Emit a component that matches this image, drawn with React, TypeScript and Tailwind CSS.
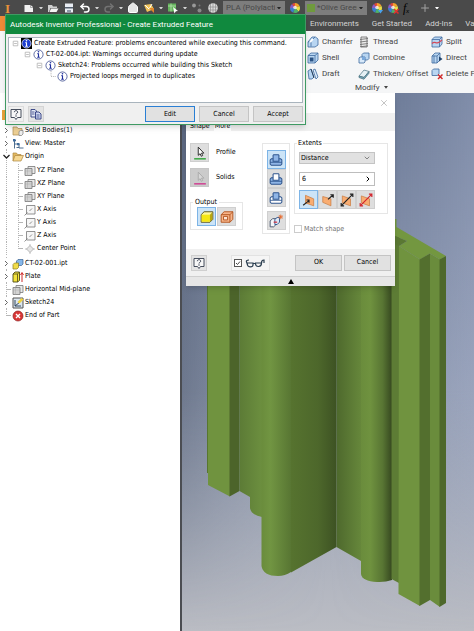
import React from "react";
import { ChevronDown, ChevronRight, Home, Plus, Redo2, Undo2, X } from "lucide-react";
import { clsx } from "clsx";

type GuideKind = "closed" | "open" | "branch" | "end" | "line";

interface TreeNode {
  label: string;
  guide: GuideKind;
  icon: React.ReactNode;
  children?: TreeNode[];
}

const Svg: React.FC<{ className?: string; children: React.ReactNode }> = ({ className = "size-3", children }) => (
  <svg viewBox="0 0 12 12" className={clsx("shrink-0", className)} fill="none" aria-hidden="true">
    {children}
  </svg>
);

const Caret: React.FC<{ className?: string }> = ({ className = "text-neutral-300" }) => (
  <svg viewBox="0 0 6 4" className={clsx("w-1 shrink-0", className)} aria-hidden="true">
    <path d="M0 0h6L3 4z" fill="currentColor" />
  </svg>
);

/* Toolbar icons */

const ColorWheel: React.FC<{ badge?: "drop" | "cross" }> = ({ badge }) => (
  <Svg>
    <path d="M6 6V1a5 5 0 0 1 4.500 3z" fill="#f3a02b" />
    <path d="M6 6l4.500-2a5 5 0 0 1-1 5.500z" fill="#e9df48" />
    <path d="M6 6l3.500 3.500A5 5 0 0 1 4 10.600z" fill="#4db26a" />
    <path d="M6 6l-2 4.600A5 5 0 0 1 1 6z" fill="#3c7ed0" />
    <path d="M6 6H1a5 5 0 0 1 2-4z" fill="#8a5cc4" />
    <path d="M6 6L3 2a5 5 0 0 1 3-1z" fill="#e0483c" />
    <circle cx="6" cy="5.500" r="1.800" fill="#fff" fillOpacity=".75" />
    {badge === "drop" && <path d="M7 8h5l-2.500 3.500z" fill="#4aa3ec" />}
    {badge === "cross" && <path d="M7 7l4.500 4.500M11.500 7L7 11.500" stroke="#e22f2f" strokeWidth="1.500" />}
  </Svg>
);

const NewIcon = () => (
  <Svg>
    <path d="M1.500 3h6l2.500 2v5h-8.500z" fill="#f1f1f1" />
    <path d="M7.500 3v2.500H10" stroke="#888" strokeWidth=".7" />
  </Svg>
);

const OpenIcon = () => (
  <Svg>
    <path d="M1 3h4l1 1.500h4V6H3.500L2 10H1z" fill="#cfcfcf" />
    <path d="M4 6.500h7.500L9.500 10H2.500z" fill="#f4f4f4" />
  </Svg>
);

const SaveIcon = () => (
  <Svg>
    <path d="M2 1.500h8v9H2z" fill="#e9edf3" />
    <path d="M2 5h8v1.500H2z" fill="#55606e" />
    <path d="M4 8h4v2.500H4z" fill="#8d99a8" />
  </Svg>
);

const ReturnIcon = () => (
  <Svg>
    <path d="M1 3l7-1 3 5-7 3z" fill="#f0c35a" />
    <path d="M2 3l4 4 3-5" stroke="#fff" />
    <path d="M6 6h5v5z" fill="#e0872c" />
  </Svg>
);

const SelectIcon = () => (
  <Svg>
    <path d="M1 1.500h8v8H1z" fill="#64b45c" />
    <path d="M1 4h8M4 1.500v8" stroke="#b8e0ae" strokeWidth=".8" />
    <path d="M6 5l5 4-2.200.3L7.500 11.500z" fill="#fff" />
  </Svg>
);

const NodesIcon = () => (
  <Svg>
    <circle cx="3" cy="3.500" r="1.900" fill="#999" />
    <circle cx="8.500" cy="8.500" r="2" fill="#8a8a8a" />
    <circle cx="8.500" cy="3.500" r="1" fill="#777" />
  </Svg>
);

const GlobeIcon = () => (
  <Svg>
    <circle cx="6" cy="6" r="4.800" fill="#dcdcdc" />
    <path d="M1.500 5h9M2 8h8M6 1.200v9.600M3.500 2v8M8.500 2v8" stroke="#8c8c8c" strokeWidth=".7" />
  </Svg>
);

/* Ribbon icons */

const BLUE = "#3d6a9e";
const PALE = "#b9d6f2";

const ChamferIcon = () => (
  <Svg>
    <path d="M1 6l4-5h3.500L11 3v6l-3 2H1z" fill={PALE} stroke={BLUE} strokeWidth=".8" />
    <path d="M1 6l3-1 4-4M4 5v5.500" stroke={BLUE} strokeWidth=".8" />
    <path d="M2 6l3-3.500 1.500 1L4 6.500z" fill="#fff" />
  </Svg>
);

const ShellIcon = () => (
  <Svg>
    <path d="M1 3.500L4 1h7v7l-3 3H1z" fill={PALE} stroke={BLUE} strokeWidth=".8" />
    <path d="M1 3.500h7V11M8 3.500L11 1" stroke={BLUE} strokeWidth=".8" />
    <path d="M2.800 5.500h3.700v4H2.800z" fill="#2a5385" />
  </Svg>
);

const DraftIcon = () => (
  <Svg>
    <path d="M1 3l3-2 3 8-2 2H2z" fill={PALE} stroke={BLUE} strokeWidth=".8" />
    <path d="M6 2l2-1 3 8-2 2z" fill="#dcebfa" stroke={BLUE} strokeWidth=".8" />
    <path d="M4 1l3 9" stroke="#27425f" />
  </Svg>
);

const ThreadIcon = () => (
  <Svg>
    <path d="M3 1h6v10H3z" fill="#ececec" stroke="#666" strokeWidth=".8" />
    <path d="M2 3.500l8-1M2 6l8-1M2 8.500l8-1M2 10.800l8-1" stroke="#666" strokeWidth=".8" />
  </Svg>
);

const CombineIcon = () => (
  <Svg>
    <path d="M4 2.500L5.500 1H11v5.500L9.500 8H4z" fill={PALE} stroke={BLUE} strokeWidth=".8" />
    <path d="M1 6l1-1h5v5l-1 1H1z" fill="#d8e9fa" stroke={BLUE} strokeWidth=".8" />
    <path d="M4 5h3v3H4z" fill="#7aa9dc" />
  </Svg>
);

const ThickenIcon = () => (
  <Svg>
    <path d="M1 8l5-6 5 1.500-5 6z" fill="#e5f0f4" stroke="#5a7f8d" strokeWidth=".8" />
    <path d="M1 8v1.500L6 11.200l5-6V3.500l-5 6z" fill="#7fb1c1" stroke="#4b7482" strokeWidth=".8" />
  </Svg>
);

const SplitIcon = () => (
  <Svg>
    <path d="M1 3.500L3.500 1H11v7l-2.500 3H1z" fill={PALE} stroke={BLUE} strokeWidth=".8" />
    <path d="M8.500 3.500V11M1 3.500h7.500L11 1" stroke={BLUE} strokeWidth=".8" />
    <path d="M1 7.500c3-3 4 1 7.500-1.500L11 4" stroke="#d44a5a" strokeWidth="1.200" />
  </Svg>
);

const DirectIcon = () => (
  <Svg>
    <path d="M1 4l3-3h5v7l-3 3H1z" fill={PALE} stroke={BLUE} strokeWidth=".8" />
    <path d="M3 3.500V11M6 4v7M1 4h5l3-3" stroke={BLUE} strokeWidth=".8" />
    <path d="M8 4.500l3.500 2.500L8 9.500z" fill="#21456f" />
  </Svg>
);

const DeleteFaceIcon = () => (
  <Svg>
    <path d="M1 2.500L2.500 1H8v5L6.500 7.500H1z" fill={PALE} stroke={BLUE} strokeWidth=".8" />
    <path d="M7 6.500l4.500 4.500M11.500 6.500L7 11" stroke="#d02a2a" strokeWidth="1.500" />
  </Svg>
);

/* Browser icons */

const BodiesIcon = () => (
  <Svg>
    <path d="M1 2h4l1 1.500h4V10H1z" fill="#eccf94" stroke="#a98a52" strokeWidth=".7" />
    <path d="M7 6.500l1.500-1H11V9l-1.500 1.500H7z" fill="#eee" stroke="#888" strokeWidth=".8" />
  </Svg>
);

const ViewIcon = () => (
  <Svg>
    <path d="M1 2.500h3M2.500 1v9.500M2.500 6H6M7 6v4h4.500M4.500 9.500H7" stroke="#3b5f85" strokeWidth=".9" />
    <path d="M1 1h2.500v2.500H1zM5 5h2.500v2.200H5z" fill="#3f6c9d" />
  </Svg>
);

const FolderIcon = () => (
  <Svg>
    <path d="M1 10V2h3.500l1 1.500H9V5" fill="#e2b861" stroke="#ad8640" strokeWidth=".7" />
    <path d="M1 10l2-5.500h8.500L9 10z" fill="#f6d892" stroke="#ad8640" strokeWidth=".7" />
  </Svg>
);

const PlaneIcon = () => (
  <Svg>
    <path d="M4 1.500h7v7H4z" fill="#e8e8e8" stroke="#777" strokeWidth=".8" />
    <path d="M1 3.500h7v7H1z" fill="#d3d3d3" stroke="#777" strokeWidth=".8" />
    <path d="M3.500 3.500v7M1 6h7" stroke="#aaa" strokeWidth=".5" />
  </Svg>
);

const AxisIcon = () => (
  <Svg>
    <path d="M2.500 1.500H11V10H2.500z" fill="#f6f6f6" stroke="#777" strokeWidth=".8" />
    <path d="M.5 11.500l3-3M5.500 7L8 4.500" stroke="#777" strokeWidth=".8" />
  </Svg>
);

const PointIcon = () => (
  <Svg>
    <path d="M6 1v10M1 6h10" stroke="#aaa" strokeWidth=".7" />
    <path d="M6 2.500L9.500 6 6 9.500 2.500 6z" fill="#e6e6e6" stroke="#aaa" strokeWidth=".8" />
  </Svg>
);

const PartIcon = () => (
  <Svg>
    <path d="M4.500 3L6 1.500h5V6L9.500 7.500h-5z" fill="#86b7ea" stroke="#3b628f" strokeWidth=".7" />
    <path d="M1 6.500L2.500 5h4v4.500L5 11H1z" fill="#f0dc4a" stroke="#8c7c1f" strokeWidth=".7" />
  </Svg>
);

const PlateIcon = () => (
  <Svg>
    <path d="M1 3l2-2h4.500v8.500l-2 1.500H1z" fill="#f3e33c" stroke="#4c4714" strokeWidth=".9" />
    <path d="M5.500 3H1M5.500 3v8M5.500 3l2-2" stroke="#4c4714" strokeWidth=".8" />
    <path d="M10 11V2M8.500 4L10 1.500 11.500 4" stroke="#cf2b2b" />
  </Svg>
);

const SketchIcon = () => (
  <Svg>
    <path d="M1 1h10v10H1z" fill="#dce6ef" stroke="#555" />
    <path d="M3 3v6h6M3 9l5-4" stroke="#34495e" />
    <path d="M5.500 5l4-4 2 1.500-4 4z" fill="#f0d23c" />
  </Svg>
);

const StopIcon = () => (
  <Svg>
    <circle cx="6" cy="6" r="5" fill="#d93636" stroke="#8f1f1f" strokeWidth=".7" />
    <path d="M4 4l4 4M8 4L4 8" stroke="#fff" strokeWidth="1.400" />
  </Svg>
);

/* Dialog icons */

const InfoIcon: React.FC<{ selected?: boolean }> = ({ selected }) => (
  <Svg className={clsx("size-[11px]", selected && "bg-black")}>
    <circle cx="6" cy="6" r="5" fill={selected ? "#1f3fd0" : "#fff"} stroke={selected ? "#fff" : "#2b3c86"} strokeWidth=".8" />
    <path d="M6 5v4M4.800 5H6M4.600 9h2.800" stroke={selected ? "#fff" : "#1c2c9c"} strokeWidth="1.200" />
    <circle cx="6" cy="3" r=".9" fill={selected ? "#fff" : "#1c2c9c"} />
  </Svg>
);

const HelpIcon = () => (
  <Svg>
    <path d="M1 1.500h10v8H7.500L6 11.500 4.500 9.500H1z" fill="#f8f8f8" stroke="#333c4d" strokeWidth=".9" />
    <path d="M4.300 4.200c0-2 3.400-2 3.400 0C7.700 5.400 6 5.200 6 6.500" stroke="#333c4d" />
    <circle cx="6" cy="8" r=".7" fill="#333c4d" />
  </Svg>
);

const CopyIcon = () => (
  <Svg>
    <path d="M1 1.500h4L6.500 3v6H1z" fill="#e4e8f6" stroke="#2f3c80" strokeWidth=".9" />
    <path d="M5.500 4h3.500L11 6v5H5.500z" fill="#d0d7f2" stroke="#2f3c80" strokeWidth=".9" />
    <path d="M2 4h2.500M2 6h2.500M6.500 7h3M6.500 9h3" stroke="#2f3c80" strokeWidth=".8" />
  </Svg>
);

const PickIcon: React.FC<{ line: string; muted?: boolean }> = ({ line, muted }) => (
  <Svg className="size-[14px]">
    <path
      d="M4.500 1v7l1.600-1.400 1 2.200 1.200-.6-1-2.100h2z"
      fill={muted ? "#d8d8d8" : "#fff"}
      stroke={muted ? "#a9a9a9" : "#222"}
      strokeWidth=".8"
    />
    <path d="M1 11h10" stroke={line} strokeWidth="1.200" />
  </Svg>
);

const BooleanIcon: React.FC<{ top: string; base: string }> = ({ top, base }) => (
  <Svg className="size-[14px]">
    <path d="M1 6l1-1h8l1 1v3.500l-1 1H2l-1-1z" fill={base} stroke="#2f568f" strokeWidth=".9" />
    <path d="M3.500 2l.5-.5h4l.5.5v5h-5z" fill={top} stroke="#2f568f" strokeWidth=".9" />
    <path d="M1 8h10" stroke="#2f568f" strokeWidth=".7" />
  </Svg>
);

const NewSolidIcon = () => (
  <Svg className="size-[14px]">
    <path d="M1 6l2-2h3v5L4 11H1z" fill="#f5f7fa" stroke="#47566e" strokeWidth=".8" />
    <path d="M5 4.500L7 3h2v4L7 9H5z" fill="#dfe9f6" stroke="#2f568f" strokeWidth=".8" />
    <path d="M4 7h3" stroke="#cf2b3b" />
    <path d="M10 .5v4M8 2.500h4M8.600 1l2.800 3M11.400 1L8.600 4" stroke="#e66a2c" strokeWidth=".7" />
  </Svg>
);

const SolidOutputIcon = () => (
  <Svg className="size-[14px]">
    <path d="M1 4l2.500-2.500H11V8l-2.500 2.500H1z" fill="#fff79a" stroke="#55501c" strokeWidth=".8" />
    <path d="M1.400 4h7.100v6H1.400z" fill="#f5e614" />
    <path d="M8.500 4l2-2v6l-2 2z" fill="#b8a70f" />
  </Svg>
);

const SurfaceOutputIcon = () => (
  <Svg className="size-[14px]">
    <path d="M1 4l2.500-2.500H11V8l-2.500 2.500H1z" fill="#f6b489" stroke="#b3541e" strokeWidth=".8" />
    <path d="M1 4h7.500v6.500M8.500 4L11 1.500" stroke="#b3541e" strokeWidth=".8" />
    <path d="M3 5.500h3.500v3H3z" fill="#fbe6d8" stroke="#b3541e" strokeWidth=".8" />
  </Svg>
);

const DirectionIcon: React.FC<{ plane: string; arrow: string; color?: string }> = ({ plane, arrow, color = "#222" }) => (
  <Svg className="size-[14px]">
    <path d={plane} fill="#f9ad72" stroke="#c87a3e" strokeWidth=".6" />
    <path d={arrow} stroke={color} />
  </Svg>
);

const GlassesIcon = () => (
  <svg viewBox="0 0 20 10" className="w-[20px]" fill="none" aria-hidden="true">
    <path d="M2 5h6v2c0 2.500-5 2.500-5.500 0zM10.500 5h6c0 4.500-5.500 4.500-6 1zM8 5.500h2.500" stroke="#2b3e50" strokeWidth="1.200" />
    <path d="M2 5c-1.500-2 0-3 2-3M16.500 5c0-2 .5-3 2.500-3v3" stroke="#2b3e50" strokeWidth="1.200" />
  </svg>
);

/* Tree */

const Guide: React.FC<{ kind: GuideKind }> = ({ kind }) => (
  <svg viewBox="0 0 12 13" className="h-full w-3 shrink-0" fill="none" aria-hidden="true">
    <path d={kind === "end" ? "M6.500 0v6.500" : "M6.500 0v13"} stroke="#b5b5b5" strokeDasharray="1 1" />
    {(kind === "branch" || kind === "end") && <path d="M6 6.500h5" stroke="#b5b5b5" />}
    {kind === "closed" && (
      <>
        <path d="M3 2h7v9H3z" fill="#fff" />
        <path d="M5 4l2.500 2.500L5 9" stroke="#666" />
      </>
    )}
    {kind === "open" && (
      <>
        <path d="M3 3h7v7H3z" fill="#fff" />
        <path d="M3.500 5l3 3 3-3" stroke="#222" strokeWidth="1.300" />
      </>
    )}
  </svg>
);

const modelTree: TreeNode[] = [
  { label: "Solid Bodies(1)", guide: "closed", icon: <BodiesIcon /> },
  { label: "View: Master", guide: "closed", icon: <ViewIcon /> },
  {
    label: "Origin",
    guide: "open",
    icon: <FolderIcon />,
    children: [
      { label: "YZ Plane", guide: "branch", icon: <PlaneIcon /> },
      { label: "XZ Plane", guide: "branch", icon: <PlaneIcon /> },
      { label: "XY Plane", guide: "branch", icon: <PlaneIcon /> },
      { label: "X Axis", guide: "branch", icon: <AxisIcon /> },
      { label: "Y Axis", guide: "branch", icon: <AxisIcon /> },
      { label: "Z Axis", guide: "branch", icon: <AxisIcon /> },
      { label: "Center Point", guide: "end", icon: <PointIcon /> },
    ],
  },
  { label: "CT-02-001.ipt", guide: "closed", icon: <PartIcon /> },
  { label: "Plate", guide: "closed", icon: <PlateIcon /> },
  { label: "Horizontal Mid-plane", guide: "branch", icon: <PlaneIcon /> },
  { label: "Sketch24", guide: "closed", icon: <SketchIcon /> },
  { label: "End of Part", guide: "end", icon: <StopIcon /> },
];

const TreeList: React.FC<{ nodes: TreeNode[]; nested?: boolean }> = ({ nodes, nested }) => (
  <ul className={clsx(nested && "mt-px mb-0.5")}>
    {nodes.map((node) => (
      <li key={node.label}>
        <div className="flex h-[13px] items-center whitespace-nowrap">
          {nested && <Guide kind="line" />}
          <Guide kind={node.guide} />
          {node.icon}
          <span className="ml-px">{node.label}</span>
        </div>
        {node.children && <TreeList nodes={node.children} nested />}
      </li>
    ))}
  </ul>
);

/* Main window */

const QuickAccessBar = () => (
  <header className="flex h-4 items-center gap-1 overflow-hidden bg-[#4a4a4a] pl-[3px] text-[8px] text-neutral-300">
    <span className="w-4 pl-0.5 font-['Liberation_Serif',serif] text-[13px] leading-none font-bold text-[#e8933a]">I</span>
    <NewIcon />
    <Caret />
    <OpenIcon />
    <SaveIcon />
    <Undo2 className="size-3 shrink-0 text-white" strokeWidth={3} />
    <Caret />
    <Redo2 className="size-3 shrink-0 text-neutral-500" strokeWidth={3} />
    <Caret />
    <Home className="size-3 shrink-0 fill-neutral-200 text-white" />
    <ReturnIcon />
    <Caret />
    <SelectIcon />
    <Caret />
    <NodesIcon />
    <GlobeIcon />
    <label className="relative flex w-[62px] shrink-0 items-center">
      <select aria-label="Material" className="h-3.5 w-full appearance-none bg-[#7d7d7d] pr-2.5 pl-[3px] text-[#484848]">
        <option>PLA (Polylactic Acid)</option>
      </select>
      <Caret className="absolute right-1 text-neutral-800" />
    </label>
    <ColorWheel />
    <label className="relative flex w-[62px] shrink-0 items-center">
      <select aria-label="Appearance" className="h-3.5 w-full appearance-none bg-[#7d7d7d] pr-2.5 pl-3 text-[#484848]">
        <option>*Olive Green</option>
      </select>
      <span className="absolute left-0.5 h-2 w-2 bg-[#6f9a3d]" />
      <Caret className="absolute right-1 text-neutral-800" />
    </label>
    <ColorWheel badge="drop" />
    <ColorWheel badge="cross" />
    <span className="w-3 shrink-0 font-['Liberation_Serif',serif] text-[12px] leading-none text-black italic">fₓ</span>
    <Plus className="size-3 shrink-0 text-neutral-400" />
    <Caret className="text-white" />
  </header>
);

const RibbonTabs = () => (
  <nav className="flex h-[15px] items-center bg-[#4a4a4a] text-[8px] whitespace-nowrap text-neutral-300">
    <button aria-label="File" className="h-full w-[18px] shrink-0 bg-[#ee8a38]" />
    <div className="flex gap-[13px] overflow-hidden pl-[292px]">
      {["Environments", "Get Started", "Add-Ins", "Vault"].map((tab) => (
        <button key={tab}>{tab}</button>
      ))}
    </div>
  </nav>
);

const ribbonTools = [
  { label: "Chamfer", icon: <ChamferIcon /> },
  { label: "Thread", icon: <ThreadIcon /> },
  { label: "Split", icon: <SplitIcon /> },
  { label: "Shell", icon: <ShellIcon /> },
  { label: "Combine", icon: <CombineIcon /> },
  { label: "Direct", icon: <DirectIcon /> },
  { label: "Draft", icon: <DraftIcon /> },
  { label: "Thicken/ Offset", icon: <ThickenIcon /> },
  { label: "Delete Face", icon: <DeleteFaceIcon /> },
];

const Ribbon = () => (
  <section className="flex bg-[#f5f6f7] pl-[307px] text-[8px] text-[#444]">
    <div className="w-full overflow-hidden pt-[3px]">
      <div className="grid grid-cols-[51px_73px_60px]">
        {ribbonTools.map((tool) => (
          <button key={tool.label} className="flex h-4 items-center gap-[3px] whitespace-nowrap">
            {tool.icon}
            {tool.label}
          </button>
        ))}
      </div>
      <button className="ml-12 flex h-[11px] items-center gap-1">
        Modify
        <Caret className="text-[#444]" />
      </button>
    </div>
  </section>
);

const ModelBrowser = () => (
  <aside className="w-[180px] shrink-0 bg-white font-['DejaVu_Sans_Condensed','Open_Sans',sans-serif] text-[7px] text-black">
    <div className="flex h-[31px] flex-col justify-end pb-1">
      <span className="ml-0.5 h-2.5 w-3 bg-[#e8a23c]" />
    </div>
    <TreeList nodes={modelTree} />
  </aside>
);

const Viewport = () => (
  <main className="min-w-0 flex-1 border-l-2 border-[#4b4d52] bg-linear-to-b from-[#657491] via-[#8b96ae] via-50% to-[#bbbdc4]">
    <svg viewBox="182 93 292 538" className="block w-full" aria-label="Extruded part">
      <defs>
        <linearGradient id="shade" x1="0" x2="1">
          <stop offset="0" stopColor="#4b566a" stopOpacity=".5" />
          <stop offset=".5" stopColor="#8f9ab3" stopOpacity="0" />
          <stop offset="1" stopColor="#aab4cf" stopOpacity=".4" />
        </linearGradient>
        <linearGradient id="fade" x1="0" x2="0" y1="0" y2="1">
          <stop offset=".55" stopColor="#fff" />
          <stop offset="1" stopColor="#000" />
        </linearGradient>
        <mask id="lower">
          <path d="M182 93h292v538H182z" fill="url(#fade)" />
        </mask>
        <linearGradient id="web" x1="0" x2="1">
          <stop offset="0" stopColor="#5c7b36" />
          <stop offset="1" stopColor="#6c8f3f" />
        </linearGradient>
        <linearGradient id="round" x1="0" x2="1">
          <stop offset="0" stopColor="#6a8c3c" />
          <stop offset=".3" stopColor="#719542" />
          <stop offset="1" stopColor="#587633" />
        </linearGradient>
        <linearGradient id="inner" x1="0" x2="1">
          <stop offset="0" stopColor="#56732f" />
          <stop offset=".6" stopColor="#4d672b" />
          <stop offset="1" stopColor="#3d5223" />
        </linearGradient>
        <linearGradient id="side" x1="0" x2="1">
          <stop offset="0" stopColor="#4e692d" />
          <stop offset="1" stopColor="#66873b" />
        </linearGradient>
        <linearGradient id="rib" x1="0" x2="1">
          <stop offset="0" stopColor="#6a8c3c" />
          <stop offset=".3" stopColor="#6f923f" />
          <stop offset=".7" stopColor="#587533" />
          <stop offset="1" stopColor="#364820" />
        </linearGradient>
      </defs>
      <path d="M182 93h292v538H182z" fill="url(#shade)" mask="url(#lower)" />
      <path d="M207 260h2v225h-1v-12h-1z" fill="#58762f" />
      <path d="M208 260h22v236.500L208 485z" fill="#70933f" />
      <path d="M229.500 260h10v231l-10 5.500z" fill="#4c642a" />
      <path d="M239.500 260H262v257q-11-2-12-9v-11l-10.500-6z" fill="url(#web)" />
      <path d="M261.500 260H291v312q-6 4-13 4-15 0-16.500-10z" fill="url(#round)" />
      <path d="M291 260h45.500v287L291 572.500z" fill="url(#inner)" />
      <path d="M336.500 260H361v301l-24.500-14z" fill="url(#side)" />
      <path d="M361 260h31v320q-7 2.500-15 2-15-1-16-8z" fill="url(#rib)" />
      <path d="M391.500 236h7.500v347l-7.500-4z" fill="#5d7c35" />
      <path d="M395 219h1.500v8l49.500 29-6 3.500-10-6-10 6-21-13.500 8-5-12-5z" fill="#739740" />
      <path d="M395 236l12 5-8 5-4-2z" fill="#5a7833" />
      <path d="M399 246l21 13.500V606l-21.500-12z" fill="#70933f" />
      <path d="M419.500 259.500l10.500-6V600l-10.500 6z" fill="#536f2e" />
      <path d="M430 253.500l10 6V607l-10-7z" fill="#6a8c3c" />
      <path d="M439.500 259.500l6.500-3.500v347l-6.500 4z" fill="#4e682b" />
    </svg>
  </main>
);

/* Floating dialogs */

const PushButton: React.FC<{ primary?: boolean; children: React.ReactNode }> = ({ primary, children }) => (
  <button
    className={clsx(
      "h-4 flex-1 border bg-[#e1e1e1] leading-none",
      primary ? "border-[#2a7fd4]" : "border-[#c4c4c4]"
    )}
  >
    {children}
  </button>
);

const messages = [
  { text: "Create Extruded Feature: problems encountered while executing this command.", indent: "pl-0" },
  { text: "CT-02-004.ipt: Warnings occurred during update", indent: "pl-3" },
  { text: "Sketch24: Problems occurred while building this Sketch", indent: "pl-6" },
  { text: "Projected loops merged in to duplicates", indent: "pl-9" },
];

const MessageDialog = () => (
  <section
    role="dialog"
    aria-label="Create Extruded Feature"
    className="absolute top-[14px] left-[5px] w-[301px] border border-[#3f9a63] bg-[#f0f0f0] font-['DejaVu_Sans_Condensed','Open_Sans',sans-serif] text-[7px] text-black shadow-md"
  >
    <h1 className="flex h-[19px] items-center bg-[#10893e] pl-1 font-['Roboto',sans-serif] text-[8px] text-white">
      Autodesk Inventor Professional - Create Extruded Feature
    </h1>
    <ul className="mx-0.5 mt-[3px] h-[66px] border border-[#a9b4bd] bg-white pl-px">
      {messages.map((message, index) => (
        <li key={message.text} className={clsx("flex h-[11px] items-center whitespace-nowrap", message.indent)}>
          <Svg className="size-[11px]">
            {index < 3 ? (
              <path d="M3.500 3.500h5v5h-5zM4.500 6h3" stroke="#aaa" strokeWidth=".8" />
            ) : (
              <path d="M5.500 0v6h6" stroke="#aaa" strokeDasharray="1 1" />
            )}
          </Svg>
          <InfoIcon selected={index === 0} />
          <span className="ml-0.5">{message.text}</span>
        </li>
      ))}
    </ul>
    <div className="flex items-center gap-1 px-0.5 pt-[3px] pb-0.5">
      <button aria-label="Help" className="border border-[#dcdcdc] p-px">
        <HelpIcon />
      </button>
      <button aria-label="Copy" className="border border-[#d4d4d4] bg-[#e4e4e4] p-px">
        <CopyIcon />
      </button>
      <div className="ml-auto flex w-[158px] gap-1">
        <PushButton primary>Edit</PushButton>
        <PushButton>Cancel</PushButton>
        <PushButton>Accept</PushButton>
      </div>
    </div>
  </section>
);

const ToolButton: React.FC<{ label: string; active?: boolean; muted?: boolean; children: React.ReactNode }> = ({
  label,
  active,
  muted,
  children,
}) => (
  <button
    aria-label={label}
    className={clsx(
      "flex size-[19px] items-center justify-center border",
      active && "border-[#7db4e6] bg-[#cce4f7]",
      muted && "border-[#c6c6c6] bg-[#cbcbcb]",
      !active && !muted && "border-[#cfcfcf] bg-[#dedede]"
    )}
  >
    {children}
  </button>
);

const CheckBox: React.FC<{ id: string; checked?: boolean; disabled?: boolean }> = ({ id, checked, disabled }) => (
  <span className="relative flex size-2">
    <input
      id={id}
      type="checkbox"
      defaultChecked={checked}
      disabled={disabled}
      className="peer size-2 appearance-none border border-[#555] bg-white disabled:border-[#ccc]"
    />
    <svg viewBox="0 0 8 8" className="pointer-events-none absolute inset-0 hidden peer-checked:block" fill="none">
      <path d="M2 4l1.500 1.500L6 2.500" stroke="#333" strokeWidth=".9" />
    </svg>
  </span>
);

const ExtrudeDialog = () => (
  <section
    role="dialog"
    aria-label="Extrude"
    className="absolute top-[93px] left-[186px] w-[209px] bg-white font-['DejaVu_Sans_Condensed','Open_Sans',sans-serif] text-[7px] text-black shadow-md"
  >
    <div className="flex h-5 items-center justify-end pr-1.5">
      <button aria-label="Close" className="text-neutral-400">
        <X className="size-2.5" strokeWidth={1.5} />
      </button>
    </div>
    <div className="flex h-[18px] items-end gap-1 bg-[#f0f0f0] pl-1 leading-[10px]">
      <button>Shape</button>
      <button className="bg-white px-px">More</button>
    </div>

    <div className="flex h-[118px] items-start pt-3 pl-1">
      <div className="flex w-[52px] flex-col gap-[6px]">
        <label className="flex items-center gap-[7px]">
          <ToolButton label="Profile">
            <PickIcon line="#2ca336" />
          </ToolButton>
          Profile
        </label>
        <label className="flex items-center gap-[7px]">
          <ToolButton label="Solids" muted>
            <PickIcon line="#d0398f" muted />
          </ToolButton>
          Solids
        </label>
        <fieldset className="mt-1 border border-[#e6e6e6] px-1.5 pb-[3px]">
          <legend className="-ml-1 px-0.5 leading-[10px]">Output</legend>
          <div className="flex gap-px">
            <ToolButton label="Solid" active>
              <SolidOutputIcon />
            </ToolButton>
            <ToolButton label="Surface">
              <SurfaceOutputIcon />
            </ToolButton>
          </div>
        </fieldset>
      </div>

      <div className="ml-5 flex w-7 flex-col items-center border border-[#e6e6e6] pt-[6px] pb-[3px]">
        <ToolButton label="Join" active>
          <BooleanIcon top="#8fb5e6" base="#8fb5e6" />
        </ToolButton>
        <ToolButton label="Cut">
          <BooleanIcon top="#ffffff" base="#8fb5e6" />
        </ToolButton>
        <ToolButton label="Intersect">
          <BooleanIcon top="#8fb5e6" base="#ffffff" />
        </ToolButton>
        <div className="mt-1">
          <ToolButton label="New solid">
            <NewSolidIcon />
          </ToolButton>
        </div>
      </div>

      <div className="ml-1 w-[94px]">
        <fieldset className="-mt-[5px] border border-[#e6e6e6] px-1 pb-1">
          <legend className="-ml-0.5 px-px leading-[10px]">Extents</legend>
          <label className="relative mt-1 flex w-[76px] items-center">
            <select aria-label="Extents type" className="h-3 w-full appearance-none border border-[#c4c4c4] bg-[#e1e1e1] pl-px leading-none">
              <option>Distance</option>
            </select>
            <ChevronDown className="absolute right-1 size-2 text-neutral-600" />
          </label>
          <div className="mt-2 flex h-[14px] w-[76px] items-center border border-[#bdbdbd]">
            <input aria-label="Distance" defaultValue="6" className="w-full min-w-0 pl-0.5 outline-none" />
            <button aria-label="Distance options" className="pr-0.5">
              <ChevronRight className="size-2" strokeWidth={3} />
            </button>
          </div>
          <div className="mt-1 flex">
            <ToolButton label="Direction 1" active>
              <DirectionIcon plane="M3 2l7 3v6L3 8.500z" arrow="M1 10.500l5-4M3.800 6H6v2.300" />
            </ToolButton>
            <ToolButton label="Direction 2">
              <DirectionIcon plane="M1.500 3l7 2v6l-7-3z" arrow="M6 5.500l4.500-4M8 1.500h2.500V4" />
            </ToolButton>
            <ToolButton label="Symmetric">
              <DirectionIcon plane="M2 2.500l7 2.500v6L2 8.500z" arrow="M1 11L11 1M8.500 1H11v2.500M1 8.500V11h2.500" />
            </ToolButton>
            <ToolButton label="Asymmetric">
              <DirectionIcon plane="M2 2.500l7 2.500v6L2 8.500z" arrow="M1 11L11 1M8.500 1H11v2.500M1 8.500V11h2.500" color="#d2242c" />
            </ToolButton>
          </div>
        </fieldset>
        <div className="mt-2.5 flex items-center gap-0.5 text-neutral-500">
          <CheckBox id="match-shape" disabled />
          <label htmlFor="match-shape">Match shape</label>
        </div>
      </div>
    </div>

    <div className="flex h-[27px] items-center bg-[#f0f0f0] pr-1 pl-[5px]">
      <button aria-label="Help" className="border border-[#cfcfcf] bg-[#e4e4e4] p-px">
        <HelpIcon />
      </button>
      <div className="ml-6 flex h-4 items-center gap-[3px] border border-[#e2e2e2] bg-[#f5f5f5] pr-1 pl-0.5">
        <CheckBox id="preview" checked />
        <label htmlFor="preview" aria-label="Preview">
          <GlassesIcon />
        </label>
      </div>
      <div className="ml-auto flex w-[96px] gap-0.5">
        <PushButton>OK</PushButton>
        <PushButton>Cancel</PushButton>
      </div>
    </div>
    <button aria-label="Collapse" className="flex h-2.5 w-full items-center justify-center border-t border-[#cfcfcf] bg-[#e6e6e6]">
      <svg viewBox="0 0 6 5" className="w-1.5" aria-hidden="true">
        <path d="M3 0l3 5H0z" fill="#000" />
      </svg>
    </button>
  </section>
);

export default function App() {
  return (
    <div className="relative flex min-h-screen flex-col overflow-hidden bg-[#4a4a4a] font-['Roboto',sans-serif]">
      <QuickAccessBar />
      <RibbonTabs />
      <Ribbon />
      <div className="flex flex-1">
        <ModelBrowser />
        <Viewport />
      </div>
      <ExtrudeDialog />
      <MessageDialog />
    </div>
  );
}
